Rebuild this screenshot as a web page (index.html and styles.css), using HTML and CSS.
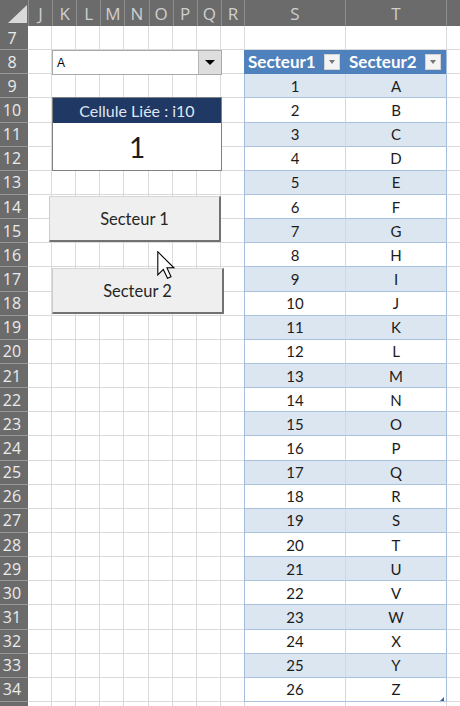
FILE: index.html
```html
<!DOCTYPE html>
<html lang="fr">
<head>
<meta charset="utf-8">
<title>Feuille</title>
<link rel="stylesheet" href="styles.css">
</head>
<body>
<div class="sheet">
  <div class="colheads">
    <div class="corner"><svg width="28" height="26" viewBox="0 0 28 26"><polygon points="27,5 27,23 8,23" fill="#d9d9d9"/></svg></div>
    <div class="chs">
      <div class="ch">J</div><div class="ch">K</div><div class="ch">L</div><div class="ch">M</div><div class="ch">N</div><div class="ch">O</div><div class="ch">P</div><div class="ch">Q</div><div class="ch">R</div>
    </div>
    <div class="ch ch-s">S</div>
    <div class="ch ch-t">T</div>
    <div class="ch ch-x"></div>
  </div>

  <div class="row"><div class="rh">7</div><div class="jr"></div><div class="c s"></div><div class="c t"></div><div class="c x"></div></div>
  <div class="row thr"><div class="rh">8</div><div class="jr"></div><div class="c s th"><span>Secteur1</span><span class="flt"></span></div><div class="c t th"><span>Secteur2</span><span class="flt"></span></div><div class="c x"></div></div>
  <div class="row tr band"><div class="rh">9</div><div class="jr"></div><div class="c s">1</div><div class="c t">A</div><div class="c x"></div></div>
  <div class="row tr"><div class="rh">10</div><div class="jr"></div><div class="c s">2</div><div class="c t">B</div><div class="c x"></div></div>
  <div class="row tr band"><div class="rh">11</div><div class="jr"></div><div class="c s">3</div><div class="c t">C</div><div class="c x"></div></div>
  <div class="row tr"><div class="rh">12</div><div class="jr"></div><div class="c s">4</div><div class="c t">D</div><div class="c x"></div></div>
  <div class="row tr band"><div class="rh">13</div><div class="jr"></div><div class="c s">5</div><div class="c t">E</div><div class="c x"></div></div>
  <div class="row tr"><div class="rh">14</div><div class="jr"></div><div class="c s">6</div><div class="c t">F</div><div class="c x"></div></div>
  <div class="row tr band"><div class="rh">15</div><div class="jr"></div><div class="c s">7</div><div class="c t">G</div><div class="c x"></div></div>
  <div class="row tr"><div class="rh">16</div><div class="jr"></div><div class="c s">8</div><div class="c t">H</div><div class="c x"></div></div>
  <div class="row tr band"><div class="rh">17</div><div class="jr"></div><div class="c s">9</div><div class="c t">I</div><div class="c x"></div></div>
  <div class="row tr"><div class="rh">18</div><div class="jr"></div><div class="c s">10</div><div class="c t">J</div><div class="c x"></div></div>
  <div class="row tr band"><div class="rh">19</div><div class="jr"></div><div class="c s">11</div><div class="c t">K</div><div class="c x"></div></div>
  <div class="row tr"><div class="rh">20</div><div class="jr"></div><div class="c s">12</div><div class="c t">L</div><div class="c x"></div></div>
  <div class="row tr band"><div class="rh">21</div><div class="jr"></div><div class="c s">13</div><div class="c t">M</div><div class="c x"></div></div>
  <div class="row tr"><div class="rh">22</div><div class="jr"></div><div class="c s">14</div><div class="c t">N</div><div class="c x"></div></div>
  <div class="row tr band"><div class="rh">23</div><div class="jr"></div><div class="c s">15</div><div class="c t">O</div><div class="c x"></div></div>
  <div class="row tr"><div class="rh">24</div><div class="jr"></div><div class="c s">16</div><div class="c t">P</div><div class="c x"></div></div>
  <div class="row tr band"><div class="rh">25</div><div class="jr"></div><div class="c s">17</div><div class="c t">Q</div><div class="c x"></div></div>
  <div class="row tr"><div class="rh">26</div><div class="jr"></div><div class="c s">18</div><div class="c t">R</div><div class="c x"></div></div>
  <div class="row tr band"><div class="rh">27</div><div class="jr"></div><div class="c s">19</div><div class="c t">S</div><div class="c x"></div></div>
  <div class="row tr"><div class="rh">28</div><div class="jr"></div><div class="c s">20</div><div class="c t">T</div><div class="c x"></div></div>
  <div class="row tr band"><div class="rh">29</div><div class="jr"></div><div class="c s">21</div><div class="c t">U</div><div class="c x"></div></div>
  <div class="row tr"><div class="rh">30</div><div class="jr"></div><div class="c s">22</div><div class="c t">V</div><div class="c x"></div></div>
  <div class="row tr band"><div class="rh">31</div><div class="jr"></div><div class="c s">23</div><div class="c t">W</div><div class="c x"></div></div>
  <div class="row tr"><div class="rh">32</div><div class="jr"></div><div class="c s">24</div><div class="c t">X</div><div class="c x"></div></div>
  <div class="row tr band"><div class="rh">33</div><div class="jr"></div><div class="c s">25</div><div class="c t">Y</div><div class="c x"></div></div>
  <div class="row tr"><div class="rh">34</div><div class="jr"></div><div class="c s">26</div><div class="c t">Z</div><div class="c x"></div></div>
  <div class="row"><div class="rh"></div><div class="jr"></div><div class="c s"></div><div class="c t"></div><div class="c x"></div></div>

  <div class="dropdown"><span class="dd-val">A</span><span class="dd-btn"><span class="dd-arrow"></span></span></div>

  <div class="linked">
    <div class="linked-head">Cellule Liée : i10</div>
    <div class="linked-val">1</div>
  </div>

  <div class="btn btn1">Secteur 1</div>
  <div class="btn btn2">Secteur 2</div>

  <svg class="cursor" width="19" height="29" viewBox="0 0 13 20"><path d="M0.5 0.5 L0.5 16.5 L4.3 12.7 L7.2 18.8 L9.6 17.7 L6.8 11.6 L11.6 11.6 Z" fill="#fff" stroke="#000" stroke-width="0.75" stroke-linejoin="miter"/></svg>

  <svg class="resize" width="4" height="4" viewBox="0 0 4 4"><polygon points="4,0 4,4 0,4" fill="#3b63a3"/></svg>
</div>
</body>
</html>
```

FILE: styles.css
```css
html, body {
  margin: 0;
  padding: 0;
  background: #fff;
}

.sheet {
  position: relative;
  width: 460px;
  height: 706px;
  overflow: hidden;
  background: #fff;
}

/* column headers */
.colheads {
  display: flex;
  height: 26px;
  background: #6b6b6b;
}

.corner {
  width: 28px;
  flex: none;
}

.corner svg {
  display: block;
}

.chs {
  width: 216px;
  flex: none;
  display: grid;
  grid-template-columns: repeat(8, 24.111px) 1fr;
}

.ch {
  box-sizing: border-box;
  border-left: 1px solid #8c8c8c;
  display: flex;
  align-items: center;
  justify-content: center;
  font: 17px "Open Sans", "Noto Sans", sans-serif;
  color: #cfcfcf;
  height: 26px;
}

.ch-s,
.ch-t {
  width: 101px;
  flex: none;
}

.ch-x {
  flex: 1;
}

/* rows */
.row {
  display: flex;
  height: 24.143px;
}

.rh {
  width: 28px;
  flex: none;
  box-sizing: border-box;
  padding-right: 4px;
  background: #6b6b6b;
  border-bottom: 1px solid #979797;
  color: #ebebeb;
  font: 16px "Open Sans", "Noto Sans", sans-serif;
  display: flex;
  align-items: center;
  justify-content: center;
}

.jr {
  width: 216px;
  flex: none;
  box-sizing: border-box;
  border-bottom: 1px solid #dadada;
  background-image: repeating-linear-gradient(to right, transparent 0 23.111px, #dadada 23.111px 24.111px);
}

.c {
  box-sizing: border-box;
  border-bottom: 1px solid #dadada;
  border-left: 1px solid #dadada;
  display: flex;
  align-items: center;
  justify-content: center;
  font: 15px Lato, "Open Sans", sans-serif;
  color: #1c1c1c;
}

.s,
.t {
  width: 101px;
  flex: none;
}

.x {
  flex: 1;
}

/* table */
.tr .s,
.tr .t {
  border-bottom-color: #aac1de;
}

.tr .s,
.tr .x {
  border-left-color: #a5bddc;
}

.tr .t {
  border-left-color: #d2d8e0;
}

.band .s,
.band .t {
  background: #dce6f1;
}

.th {
  background: #4f81bd;
  border-left-color: #4f81bd;
  border-bottom-color: #4f81bd;
  color: #fff;
  font-weight: 700;
  font-size: 17px;
  justify-content: space-between;
  padding: 0 5px 0 3px;
}

.thr .x {
  border-left-color: #a5bddc;
}

.flt {
  width: 16px;
  height: 16px;
  box-sizing: border-box;
  background: #f4f4f4;
  border: 1px solid #d3d3d3;
  display: flex;
  align-items: center;
  justify-content: center;
}

.flt::after {
  content: "";
  border-left: 3.5px solid transparent;
  border-right: 3.5px solid transparent;
  border-top: 4px solid #767676;
}

/* form controls lying over the grid */
.dropdown {
  position: absolute;
  left: 52px;
  top: 50px;
  width: 170px;
  height: 25px;
  box-sizing: border-box;
  border: 1px solid #a9a9a9;
  background: #fff;
  display: flex;
  align-items: center;
  justify-content: space-between;
}

.dd-val {
  padding-left: 4px;
  font: 12px "Liberation Sans", Arial, sans-serif;
  color: #000;
}

.dd-btn {
  width: 23px;
  height: 100%;
  box-sizing: border-box;
  background: #dedede;
  border-left: 1px solid #b4b4b4;
  display: flex;
  align-items: center;
  justify-content: center;
}

.dd-arrow {
  border-left: 5px solid transparent;
  border-right: 5px solid transparent;
  border-top: 5px solid #000;
}

.linked {
  position: absolute;
  left: 52px;
  top: 97px;
  width: 170px;
  height: 74px;
  box-sizing: border-box;
  border: 1px solid #808080;
  background: #fff;
  display: flex;
  flex-direction: column;
}

.linked-head {
  height: 25px;
  background: #1f3864;
  color: #dfe6f0;
  font: 16px Lato, "Open Sans", sans-serif;
  display: flex;
  align-items: center;
  justify-content: center;
}

.linked-val {
  flex: 1;
  display: flex;
  align-items: center;
  justify-content: center;
  font: 28px Lato, "Open Sans", sans-serif;
  color: #1c1c1c;
}

.btn {
  position: absolute;
  width: 172px;
  height: 46px;
  box-sizing: border-box;
  background: #efefef;
  border-top: 1px solid #d6d6d6;
  border-left: 1px solid #cdcdcd;
  border-right: 2px solid #727272;
  border-bottom: 2px solid #727272;
  display: flex;
  align-items: center;
  justify-content: center;
  font: 16.5px Lato, "Open Sans", sans-serif;
  color: #262626;
}

.btn1 {
  left: 49px;
  top: 196px;
}

.btn2 {
  left: 52px;
  top: 268px;
}

.cursor {
  position: absolute;
  left: 157px;
  top: 251px;
}

.resize {
  position: absolute;
  left: 440px;
  top: 697px;
}
```
